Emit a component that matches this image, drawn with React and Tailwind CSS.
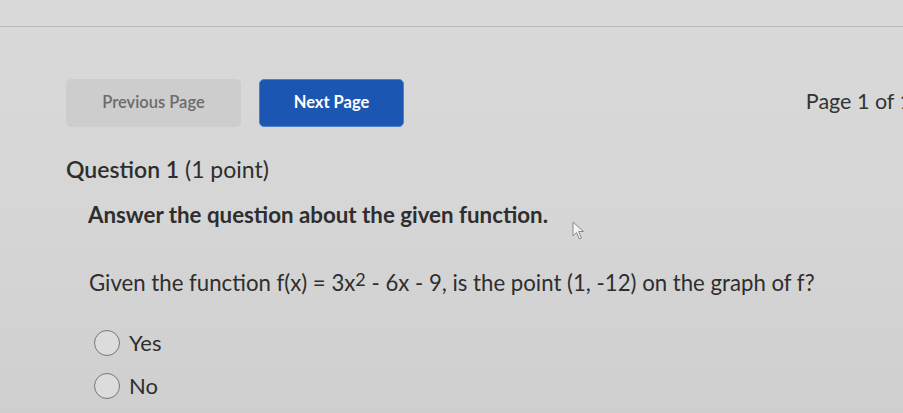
export default function App() {
  return (
    <div
      className="w-[903px] h-[413px] overflow-hidden bg-gradient-to-b from-[#d9d9d9] via-[#d6d6d6] to-[#cfcfcf] text-[#2e2e2e]"
      style={{ fontFamily: "Lato, 'Open Sans', sans-serif" }}
    >
      <div className="h-[27px] border-b border-[#b9b9b9] bg-[#dadada]" />

      {/* pager */}
      <div className="flex items-center pl-[66px] mt-[51px] h-[50px]">
        <button className="w-[175px] h-[48px] rounded-[5px] bg-[#cdcdcd] text-[#6b6b6b] text-[16.5px] font-semibold leading-none pb-[2px]">
          Previous Page
        </button>
        <button className="ml-[18px] w-[145px] h-[48px] rounded-[5px] bg-[#1b56b3] border border-[#4d7fd0] text-white text-[16.5px] font-bold leading-none pb-[2px]">
          Next Page
        </button>
        <div className="ml-auto mr-[-9px] pb-[3px] text-[21.5px] whitespace-nowrap text-[#333]">Page 1 of 1</div>
      </div>

      {/* question */}
      <div className="pl-[66px] mt-[26px] text-[23px] leading-[30px]">
        <span className="font-semibold">Question 1</span> <span>(1 point)</span>
      </div>

      <div className="relative pl-[88px] mt-[17px] text-[22.3px] font-bold leading-[28px]">
        Answer the question about the given function.
        <svg className="absolute left-[572px] top-[20px]" width="14" height="20" viewBox="0 0 14 20">
          <path d="M1 1 L1 15 L4.5 11.5 L7.5 18 L9.5 17 L6.5 10.5 L11.5 10.5 Z" fill="#f3f3f3" stroke="#8a8a8a" strokeWidth="1" />
        </svg>
      </div>

      <div className="pl-[89px] mt-[40px] text-[22.2px] leading-[28px] h-[28px] whitespace-nowrap">
        Given the function f(x) = 3x<sup className="text-[18px] leading-none relative top-[-5px]">2</sup> - 6x - 9, is the point (1, -12) on the graph of f?
      </div>

      <div className="pl-[94px] mt-[33px] flex flex-col gap-[17px]">
        {["Yes", "No"].map((o) => (
          <label key={o} className="flex items-center gap-[9px] text-[22px] leading-[26px]">
            <span className="w-[26px] h-[26px] rounded-full border-[1.5px] border-[#777] bg-[#dcdcdc]" />
            {o}
          </label>
        ))}
      </div>
    </div>
  );
}
